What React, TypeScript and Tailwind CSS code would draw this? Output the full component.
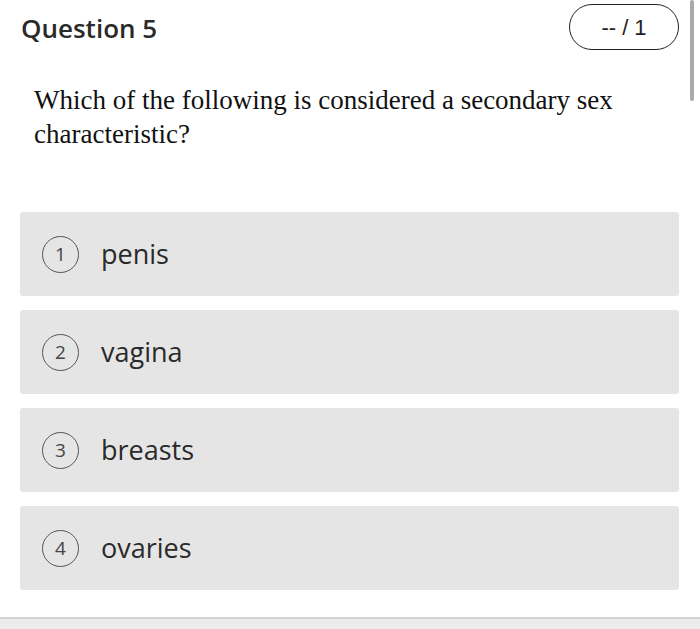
const options = ['penis', 'vagina', 'breasts', 'ovaries'];

const sans = { fontFamily: '"Open Sans", sans-serif' };

export default function App() {
  return (
    <div className="relative w-[700px] h-[629px] bg-white overflow-hidden flex flex-col">
      <div className="flex items-center justify-between pl-[21px] pr-[21px] pt-[4px]">
        <h1 className="text-[26px] font-semibold text-[#2a2a2a] leading-none pt-[1px]" style={sans}>
          Question 5
        </h1>
        <div
          className="w-[110px] h-[46px] rounded-full border-[1.5px] border-[#222] flex items-center justify-center text-[22px] text-[#222]"
          style={{ fontFamily: '"Liberation Sans", Arial, sans-serif' }}
        >
          -- / 1
        </div>
      </div>

      <p
        className="mt-[33px] pl-[34px] pr-[60px] text-[27px] leading-[34px] text-[#111]"
        style={{ fontFamily: '"Liberation Serif", "Times New Roman", serif' }}
      >
        Which of the following is considered a secondary sex characteristic?
      </p>

      <div className="mt-[61px] mx-[20px] w-[659px] flex flex-col gap-[14px]">
        {options.map((opt, i) => (
          <div key={opt} className="h-[84px] bg-[#e5e5e5] rounded-[3px] flex items-center pl-[22px] gap-[22px]">
            <div
              className="w-[37px] h-[37px] rounded-full border-[1.5px] border-[#555] flex items-center justify-center text-[19px] text-[#444]"
              style={sans}
            >
              {i + 1}
            </div>
            <span className="text-[27px] text-[#2a2a2a]" style={sans}>
              {opt}
            </span>
          </div>
        ))}
      </div>

      <div className="mt-auto h-[12px] border-t-2 border-[#d2d2d2] bg-[#ebebeb]" />

      <div className="absolute right-[6px] top-0 w-[4px] h-[101px] rounded-full bg-[#aaa]" />
    </div>
  );
}
